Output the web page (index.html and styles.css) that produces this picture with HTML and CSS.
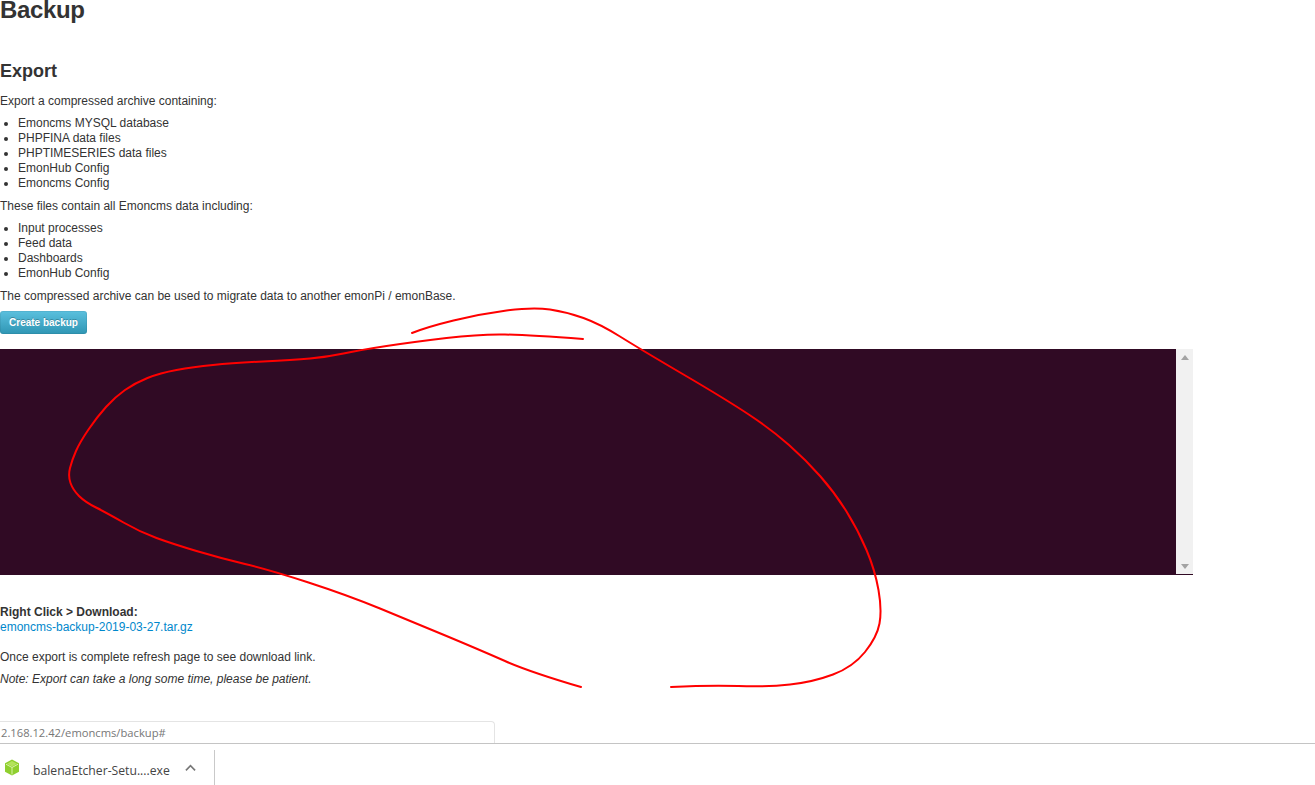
FILE: index.html
```html
<!DOCTYPE html>
<html lang="en">
<head>
<meta charset="utf-8">
<title>Backup</title>
<link rel="stylesheet" href="styles.css">
</head>
<body>
<div class="page">
  <main class="content">
    <h2 class="title">Backup</h2>
    <h3 class="section">Export</h3>
    <p>Export a compressed archive containing:</p>
    <ul>
      <li>Emoncms MYSQL database</li>
      <li>PHPFINA data files</li>
      <li>PHPTIMESERIES data files</li>
      <li>EmonHub Config</li>
      <li>Emoncms Config</li>
    </ul>
    <p>These files contain all Emoncms data including:</p>
    <ul>
      <li>Input processes</li>
      <li>Feed data</li>
      <li>Dashboards</li>
      <li>EmonHub Config</li>
    </ul>
    <p>The compressed archive can be used to migrate data to another emonPi / emonBase.</p>
    <a class="btn" href="#">Create backup</a>
    <div class="terminal">
      <div class="terminal-pane"></div>
      <div class="scrollbar">
        <span class="arrow-up"></span>
        <span class="arrow-down"></span>
      </div>
    </div>
    <div class="download">
      <b>Right Click &gt; Download:</b><br>
      <a class="link" href="#">emoncms-backup-2019-03-27.tar.gz</a>
    </div>
    <p>Once export is complete refresh page to see download link.</p>
    <p><i>Note: Export can take a long some time, please be patient.</i></p>
  </main>
  <div class="status-bubble">2.168.12.42/emoncms/backup#</div>
  <footer class="shelf">
    <div class="shelf-item">
      <svg class="file-icon" viewBox="0 0 16 17" aria-hidden="true">
        <path class="cube-base" d="M8 .5 15 4.3V12.7L8 16.5 1 12.7V4.3Z"/>
        <path class="cube-top" d="M8 2 13 4.8 8 7.6 3 4.8Z"/>
        <path class="cube-line" d="M2 5.2 8 8.5 14 5.2M8 8.5V15.5"/>
      </svg>
      <span class="file-name">balenaEtcher-Setu....exe</span>
      <svg class="chevron" viewBox="0 0 12 8" aria-hidden="true"><path d="M1 6.5 6 1.5 11 6.5"/></svg>
    </div>
    <div class="shelf-sep"></div>
  </footer>
  <svg class="scribble" viewBox="0 0 1315 785" aria-hidden="true">
    <path d="M412 333Q427 327 453.5 320.5Q480 314 506.5 310.5Q533 307 550 309.5Q567 312 583.5 318Q600 324 620 336.5Q640 349 683.5 374.5Q727 400 749.5 415Q772 430 789 445Q806 460 820.5 476.5Q835 493 846.5 511.5Q858 530 866.5 550Q875 570 878.5 590Q882 610 879.5 623.5Q877 637 865 652Q853 667 833 674.5Q813 682 790 684.5Q767 687 738.5 686Q710 685 671 687"/>
    <path d="M583 339Q530 335 505 334.5Q480 334 446.5 338Q413 342 386.5 346Q360 350 343.5 353.5Q327 357 310 358.5Q293 360 263 361.5Q233 363 213 365Q193 367 176.5 370Q160 373 147.5 378Q135 383 125 390Q115 397 106 407Q97 417 88.5 429.5Q80 442 76 451Q72 460 70 468Q68 476 70.5 483Q73 490 79 496Q85 502 96 507.5Q107 513 123.5 522.5Q140 532 156.5 538Q173 544 196.5 551Q220 558 245 564Q270 570 308.5 582.5Q347 595 380 608.5Q413 622 446.5 636Q480 650 505 661Q530 672 581 687"/>
  </svg>
</div>
</body>
</html>
```

FILE: styles.css
```css
* { box-sizing: border-box; }
html, body { margin: 0; padding: 0; background: #fff; }
body {
  font-family: "Liberation Sans", Arial, sans-serif;
  font-size: 12px;
  line-height: 15px;
  color: #333;
}
.page {
  position: relative;
  display: flex;
  flex-direction: column;
  height: 785px;
  overflow: hidden;
}
.content { flex: 1; min-height: 0; }
.title {
  margin: 0;
  font-size: 24px;
  line-height: 20px;
  letter-spacing: -.35px;
  font-weight: bold;
}
.section {
  margin: 41px 0 12.5px;
  font-size: 18px;
  line-height: 20px;
  font-weight: bold;
}
p { margin: 0 0 7.5px; }
ul { margin: 0 0 7.5px; padding: 0 0 0 18px; }
.btn {
  display: block;
  width: 87px;
  height: 23px;
  line-height: 23px;
  text-align: center;
  font-size: 10px;
  font-weight: bold;
  color: #fff;
  text-decoration: none;
  text-shadow: 0 -1px 0 rgba(0,0,0,.25);
  border-radius: 3px;
  background: linear-gradient(to bottom, #5bc0de, #2f96b4);
  box-shadow: inset 0 0 0 1px rgba(0,0,0,.06);
}
.terminal {
  display: flex;
  width: 1193px;
  height: 226px;
  margin: 15px 0 29.5px;
}
.terminal-pane { flex: 1; background: #300a24; }
.scrollbar {
  width: 17px;
  display: flex;
  flex-direction: column;
  justify-content: space-between;
  align-items: center;
  padding: 6px 0 5px;
  background: #f1f1f1;
  border-bottom: 1px solid #300a24;
}
.arrow-up, .arrow-down { width: 0; height: 0; border-left: 4px solid transparent; border-right: 4px solid transparent; }
.arrow-up { border-bottom: 5px solid #a3a3a3; }
.arrow-down { border-top: 5px solid #a3a3a3; }
.download { margin-bottom: 15px; }
.link { color: #0088cc; text-decoration: none; }
.status-bubble {
  position: absolute;
  left: 0;
  top: 721px;
  width: 495px;
  height: 22px;
  padding-left: 1px;
  font-family: "Open Sans", sans-serif;
  font-size: 11.2px;
  line-height: 22px;
  color: #777;
  background: #fff;
  border: 1px solid #e4e4e4;
  border-left: 0;
  border-bottom: 0;
  border-top-right-radius: 4px;
}
.shelf {
  flex: none;
  height: 42px;
  display: flex;
  align-items: stretch;
  background: #fff;
  border-top: 1px solid #c4c4c4;
}
.shelf-item { width: 214px; display: flex; align-items: center; padding-top: 11px; }
.file-icon { width: 16px; height: 17px; margin: -5px 0 0 4px; flex: none; }
.cube-base { fill: #8fcf2f; }
.cube-top { fill: #b4e35c; }
.cube-line { fill: none; stroke: #d8f2a8; stroke-width: 1; }
.file-name {
  margin-left: 13px;
  font-family: "Open Sans", sans-serif;
  font-size: 12.2px;
  color: #444;
  white-space: nowrap;
}
.chevron { width: 11px; height: 8px; margin-left: 15px; margin-top: -4px; flex: none; }
.chevron path { fill: none; stroke: #777; stroke-width: 1.8; }
.shelf-sep { width: 1px; margin: 6px 0 0; background: #c9c9c9; }
.scribble {
  position: absolute;
  left: 0;
  top: 0;
  width: 1315px;
  height: 785px;
  pointer-events: none;
}
.scribble path { fill: none; stroke: #f00; stroke-width: 2; stroke-linecap: round; }
```
